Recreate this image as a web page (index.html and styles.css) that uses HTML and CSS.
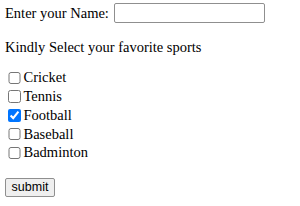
FILE: index.html
```html
<!DOCTYPE html>
<html lang="en">
<head>
    <meta charset="UTF-8"/>
    <title>Sports Form</title>
    <link rel="stylesheet" href="styles.css">
</head>
<body>
<form class="sports-form">
    <div class="name-row">
        <label class="name-label" for="name">Enter your Name:</label>
        <input class="name-input" id="name" type="text"/>
    </div>

    <p class="sports-text">Kindly Select your favorite sports</p>

    <div class="sports-list">
        <label class="sport"><input type="checkbox" name="sport" value="cricket"/>Cricket</label>
        <label class="sport"><input type="checkbox" name="sport" value="tennis"/>Tennis</label>
        <label class="sport"><input type="checkbox" name="sport" value="football" checked/>Football</label>
        <label class="sport"><input type="checkbox" name="sport" value="baseball"/>Baseball</label>
        <label class="sport"><input type="checkbox" name="sport" value="badminton"/>Badminton</label>
    </div>

    <div class="submit-row">
        <button class="submit-button" type="submit">submit</button>
    </div>
</form>
</body>
</html>
```

FILE: styles.css
```css
/* Base styles */
body {
    margin: 0;
    padding: 3px 0 0 5px;
    font-family: "Liberation Serif", "Times New Roman", serif;
    font-size: 14.5px;
    color: #000;
    background: #fff;
}

/* Name row */
.name-row {
    display: flex;
    align-items: center;
    gap: 5px;
    height: 20px;
}

.name-input {
    box-sizing: border-box;
    width: 151px;
    height: 20px;
    margin: 0;
    border: 1px solid #8f8f8f;
    border-radius: 2px;
    font-size: 13px;
}

.sports-text {
    margin: 16px 0 0;
    line-height: 17px;
}

/* Checkbox list */
.sports-list {
    margin-top: 12.6px;
}

.sport {
    display: flex;
    align-items: center;
    height: 18.75px;
}

.sport input {
    width: 12.5px;
    height: 12.5px;
    margin: 0 3px 0 3px;
}

/* Submit */
.submit-row {
    margin-top: 15.5px;
}

.submit-button {
    box-sizing: border-box;
    width: 50px;
    height: 19px;
    padding: 0;
    border: 1px solid #8f8f8f;
    border-radius: 2px;
    background: #efefef;
    font-family: "Liberation Sans", Arial, sans-serif;
    font-size: 12.5px;
    color: #000;
}
```
